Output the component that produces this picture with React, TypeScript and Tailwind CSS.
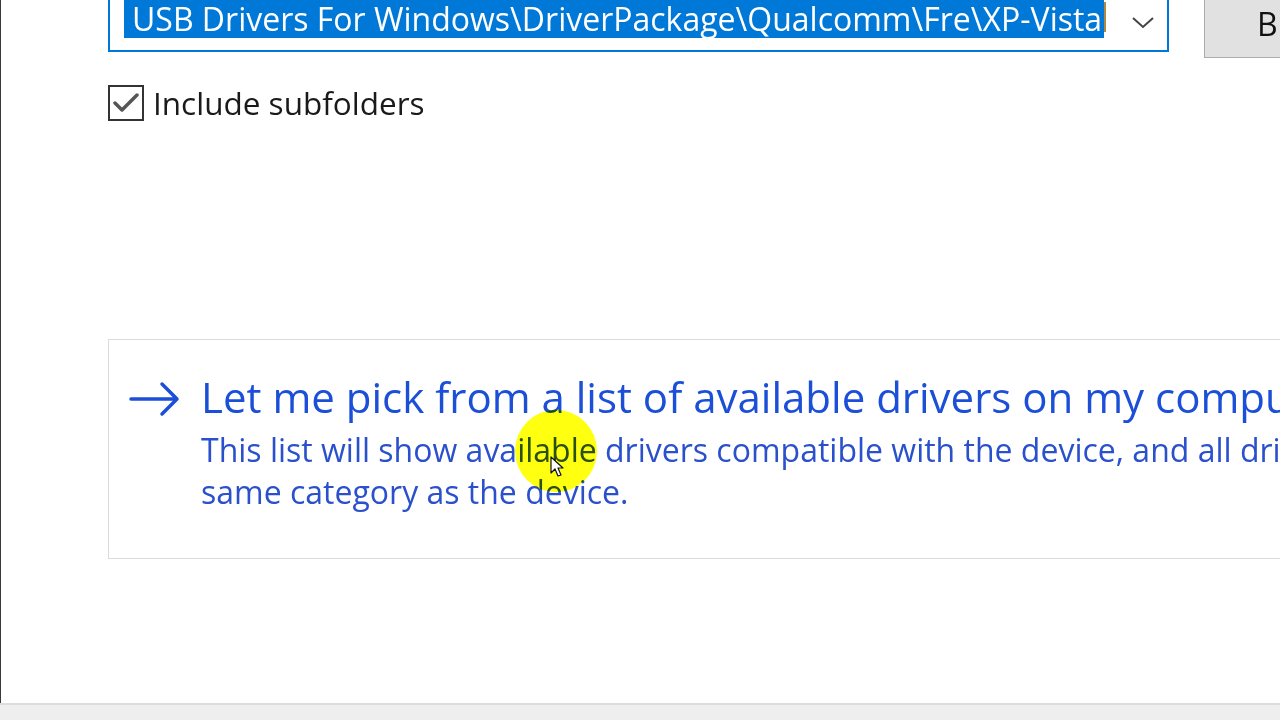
const font = { fontFamily: '"Open Sans", "Noto Sans", sans-serif' }

const Chevron = () => (
  <svg width="24" height="14" viewBox="0 0 24 14" fill="none">
    <path d="M2 2 L12 11 L22 2" stroke="#444" strokeWidth="2" />
  </svg>
)

const Check = () => (
  <svg width="26" height="22" viewBox="0 0 26 22" fill="none">
    <path d="M2 11 L9 18 L24 3" stroke="#555" strokeWidth="3.5" strokeLinecap="round" strokeLinejoin="round" />
  </svg>
)

const Arrow = () => (
  <svg width="52" height="36" viewBox="0 0 52 36" fill="none">
    <path d="M2 18 H48 M33 3 L48 18 L33 33" stroke="#1c4fd8" strokeWidth="3.5" strokeLinecap="round" strokeLinejoin="round" />
  </svg>
)

const Cursor = () => (
  <svg width="16" height="22" viewBox="0 0 16 22">
    <path d="M1 1 L1 17 L5 13 L8 20 L11 19 L8 12 L13 12 Z" fill="#fff" stroke="#111" strokeWidth="1.2" strokeLinejoin="round" />
  </svg>
)

export default function App() {
  return (
    <div className="relative flex h-[720px] w-[1280px] flex-col overflow-hidden bg-white" style={font}>
      <div className="flex flex-1 flex-col border-l border-[#3a3a3a] pl-[107px]">
        {/* path combobox + browse */}
        <div className="-mt-[20px] flex items-start">
          <div className="flex h-[72px] w-[1061px] shrink-0 items-end border-2 border-[#0078d7] bg-white pb-[12px] pl-[14px]">
            <span className="h-[38px] whitespace-nowrap bg-[#0078d7] pl-[8px] pr-[2px] text-[32px] leading-[38px] text-white">
              USB Drivers For Windows\DriverPackage\Qualcomm\Fre\XP-Vista
            </span>
            <span className="mb-[6px] h-[30px] w-[2px] bg-[#b08a3c]" />
            <div className="mb-[8px] ml-auto mr-[12px]">
              <Chevron />
            </div>
          </div>
          <div className="ml-[35px] flex h-[78px] w-[160px] shrink-0 items-end border border-[#adadad] bg-[#e1e1e1] pb-[14px] pl-[52px] text-[32px] leading-[38px] text-[#111]">
            Browse...
          </div>
        </div>

        {/* include subfolders */}
        <div className="mt-[27px] flex items-center gap-[9px]">
          <div className="flex h-[36px] w-[36px] items-center justify-center border-2 border-[#333]">
            <Check />
          </div>
          <span className="text-[31.5px] leading-[36px] text-[#1a1a1a]">Include subfolders</span>
        </div>

        {/* pick from list */}
        <div className="mt-[218px] flex h-[220px] w-[1300px] shrink-0 items-start border border-[#dadada] bg-white pl-[20px] pt-[33px]">
          <div className="mt-[8px]">
            <Arrow />
          </div>
          <div className="ml-[20px] flex flex-col whitespace-nowrap">
            <span className="text-[42px] leading-[48px] text-[#1c4fd8]">
              Let me pick from a list of available drivers on my computer
            </span>
            <span className="mt-[8px] text-[32px] leading-[42px] text-[#2a50cc]">
              This list will show available drivers compatible with the device, and all drivers in the
            </span>
            <span className="text-[32px] leading-[42px] text-[#2a50cc]">same category as the device.</span>
          </div>
        </div>
      </div>

      {/* bottom bar */}
      <div className="h-[17px] border-t-2 border-[#dddddd] bg-[#eeeeee]" />

      {/* cursor highlight */}
      <div className="pointer-events-none absolute left-[515px] top-[410px] h-[82px] w-[82px] rounded-full bg-[#ffff10] mix-blend-multiply" />
      <div className="pointer-events-none absolute left-[550px] top-[456px]">
        <Cursor />
      </div>
    </div>
  )
}
